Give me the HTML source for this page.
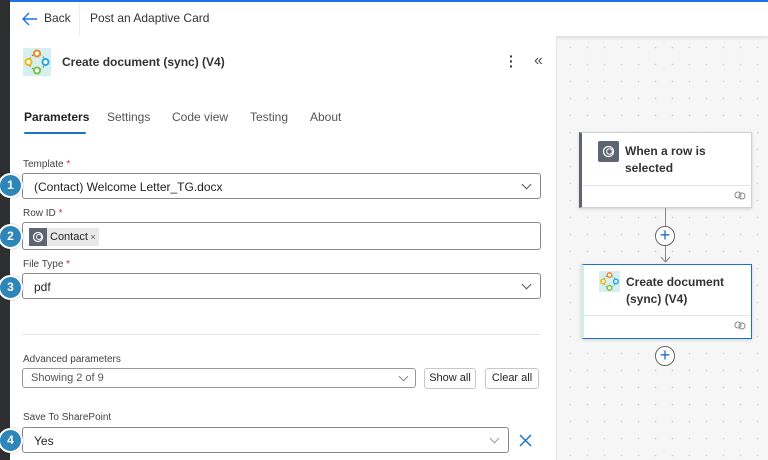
<!DOCTYPE html>
<html><head><meta charset="utf-8"><style>
*{box-sizing:border-box;margin:0;padding:0}
body{width:768px;height:460px;overflow:hidden;font-family:"Liberation Sans",sans-serif;background:#f6f6f6;position:relative;color:#242424}
.abs{position:absolute}
.lbl{position:absolute;left:23px;font-size:10px;color:#444}
.lbl b{color:#c4314b;font-weight:normal}
.inp{position:absolute;left:22px;border:1px solid #8a8a8a;border-radius:3px;background:#fff;font-size:12px;color:#242424}
.chev{position:absolute;right:10px;top:7px;width:7px;height:7px;border-right:1.2px solid #555;border-bottom:1.2px solid #555;transform:rotate(45deg)}
.num{position:absolute;left:-2px;width:25px;height:25px;border-radius:50%;background:#2e86b8;color:#fff;font-size:12px;font-weight:bold;text-align:center;line-height:21px;border:2px solid #fff;box-shadow:0 0 2px rgba(0,0,0,.3)}
.card{position:absolute;background:#fff;border:1px solid #d0d0d0;box-shadow:0 1px 3px rgba(0,0,0,.15)}
.plus{position:absolute;width:20px;height:20px;border-radius:50%;border:1px solid #666;background:#fff;color:#1b6fc7;font-size:18px;line-height:17px;text-align:center}
.btn{position:absolute;border:1px solid #c8c8c8;border-radius:3px;background:#fff;font-size:11px;text-align:center;line-height:19px}
</style></head><body>
<div class="abs" style="left:0;top:0;width:10px;height:460px;background:#2d2f31"></div>
<div class="abs" style="left:557px;top:36px;width:211px;height:424px;background-image:radial-gradient(circle,#d4d4d4 0.7px,transparent 1px);background-size:17px 17px;background-position:5px 3px"></div>
<div class="abs" style="left:10px;top:0;width:758px;height:36px;background:#fff;border-top:2px solid #1a73e8;box-shadow:0 2px 3px rgba(0,0,0,.1)">
 <svg class="abs" style="left:12px;top:10px" width="16" height="14" viewBox="0 0 16 14"><path d="M7 1L1 7l6 6M1 7h14" stroke="#1a73e8" stroke-width="1.4" fill="none"/></svg>
 <div class="abs" style="left:34px;top:9px;font-size:12px;color:#333">Back</div>
 <div class="abs" style="left:69px;top:0;width:1px;height:34px;background:#eee"></div>
 <div class="abs" style="left:80px;top:9px;font-size:12px;color:#333">Post an Adaptive Card</div>
</div>
<div class="abs" style="left:10px;top:36px;width:547px;height:424px;background:#fff;border-right:1px solid #e4e4e4"></div>
<svg class="abs" style="left:23px;top:48px" width="28" height="28" viewBox="0 0 28 28"><rect width="28" height="28" fill="#d5f0ee"/><circle cx="14" cy="14" r="8" fill="none" stroke="#777" stroke-dasharray="2 2"/><circle cx="14" cy="5.5" r="3" fill="#fff" stroke="#f08a24" stroke-width="2"/><circle cx="22.5" cy="14" r="3" fill="#fff" stroke="#21a8e0" stroke-width="2"/><circle cx="14" cy="22.5" r="3" fill="#fff" stroke="#7cc242" stroke-width="2"/><circle cx="5.5" cy="14" r="3" fill="#fff" stroke="#f5b50e" stroke-width="2"/></svg>
<div class="abs" style="left:62px;top:55px;font-size:12px;font-weight:bold;color:#333">Create document (sync) (V4)</div>
<div class="abs" style="left:509px;top:54px;font-size:14px;font-weight:bold;line-height:5px;color:#333">·<br>·<br>·</div>
<div class="abs" style="left:534px;top:52px;font-size:16px;color:#555">«</div>
<div class="abs" style="left:24px;top:110px;font-size:12px;font-weight:bold;color:#222">Parameters</div>
<div class="abs" style="left:24px;top:132px;width:62px;height:2px;background:#1a73c7;border-radius:1px"></div>
<div class="abs" style="left:107px;top:110px;font-size:12px;color:#555">Settings</div>
<div class="abs" style="left:172px;top:110px;font-size:12px;color:#555">Code view</div>
<div class="abs" style="left:250px;top:110px;font-size:12px;color:#555">Testing</div>
<div class="abs" style="left:310px;top:110px;font-size:12px;color:#555">About</div>

<div class="lbl" style="top:159px">Template <b>*</b></div>
<div class="inp" style="top:173px;width:519px;height:26px;padding:6px 11px">(Contact) Welcome Letter_TG.docx<div class="chev"></div></div>
<div class="num" style="top:173px">1</div>

<div class="lbl" style="top:208px">Row ID <b>*</b></div>
<div class="inp" style="top:222px;width:519px;height:28px">
 <div class="abs" style="left:6px;top:5px;height:18px;width:70px;background:#e9e9e9;font-size:11px;line-height:18px;padding-left:21px">Contact<span style="font-size:9px;color:#555"> ×</span></div>
 <div class="abs" style="left:6px;top:5px;width:18px;height:18px;background:#5d6570"><svg width="18" height="18" viewBox="0 0 18 18"><circle cx="9" cy="9" r="4.5" fill="none" stroke="#fff" stroke-width="1.2"/><circle cx="10" cy="9" r="2.5" fill="none" stroke="#fff" stroke-width="1"/></svg></div>
</div>
<div class="num" style="top:224px">2</div>

<div class="lbl" style="top:259px">File Type <b>*</b></div>
<div class="inp" style="top:273px;width:519px;height:26px;padding:6px 11px">pdf<div class="chev"></div></div>
<div class="num" style="top:275px">3</div>

<div class="abs" style="left:22px;top:334px;width:519px;height:1px;background:#e6e6e6"></div>
<div class="lbl" style="top:354px">Advanced parameters</div>
<div class="inp" style="top:368px;width:394px;height:20px;padding:3px 8px;font-size:11px;color:#555;border-color:#999">Showing 2 of 9<div class="chev" style="top:4px;right:8px;border-color:#888"></div></div>
<div class="btn" style="left:424px;top:368px;width:52px;height:21px">Show all</div>
<div class="btn" style="left:485px;top:368px;width:54px;height:21px">Clear all</div>

<div class="lbl" style="top:412px">Save To SharePoint</div>
<div class="inp" style="top:427px;width:487px;height:26px;padding:6px 11px">Yes<div class="chev" style="border-color:#999"></div></div>
<div class="num" style="top:428px">4</div>
<svg class="abs" style="left:519px;top:434px" width="13" height="13" viewBox="0 0 13 13"><path d="M1 1l11 11M12 1L1 12" stroke="#1a73c7" stroke-width="1.5"/></svg>

<div class="card" style="left:579px;top:132px;width:173px;height:76px;border-left:3px solid #5d6570">
 <div class="abs" style="left:16px;top:8px;width:21px;height:21px;background:#5d6570;border-radius:2px"><svg width="21" height="21" viewBox="0 0 21 21"><circle cx="10.5" cy="10.5" r="5" fill="none" stroke="#fff" stroke-width="1.2"/><circle cx="11.5" cy="10.5" r="2.8" fill="none" stroke="#fff" stroke-width="1"/></svg></div>
 <div class="abs" style="left:43px;top:10px;font-size:12px;font-weight:bold;line-height:17px;color:#333">When a row is<br>selected</div>
 <div class="abs" style="left:0;top:52px;width:170px;height:1px;background:#e4e4e4"></div>
 <svg class="abs" style="left:152px;top:58px" width="12" height="9" viewBox="0 0 12 9"><circle cx="4" cy="4" r="3" fill="none" stroke="#888"/><circle cx="8" cy="5" r="3" fill="none" stroke="#888"/></svg>
</div>
<div class="abs" style="left:665px;top:208px;width:1px;height:54px;background:#888"></div>
<svg class="abs" style="left:660px;top:256px" width="11" height="7" viewBox="0 0 11 7"><path d="M1 1l4.5 5L10 1" stroke="#888" fill="none"/></svg>
<div class="plus" style="left:655px;top:226px">+</div>
<div class="card" style="left:581px;top:264px;width:171px;height:75px;border:1.5px solid #1a73c7;border-left:3px solid #cdeeea">
 <svg class="abs" style="left:15px;top:6px" width="21" height="21" viewBox="0 0 28 28"><rect width="28" height="28" fill="#d5f0ee"/><circle cx="14" cy="14" r="8" fill="none" stroke="#777" stroke-dasharray="2 2"/><circle cx="14" cy="5.5" r="3" fill="#fff" stroke="#f08a24" stroke-width="2"/><circle cx="22.5" cy="14" r="3" fill="#fff" stroke="#21a8e0" stroke-width="2"/><circle cx="14" cy="22.5" r="3" fill="#fff" stroke="#7cc242" stroke-width="2"/><circle cx="5.5" cy="14" r="3" fill="#fff" stroke="#f5b50e" stroke-width="2"/></svg>
 <div class="abs" style="left:42px;top:9px;font-size:12px;font-weight:bold;line-height:17px;color:#333">Create document<br>(sync) (V4)</div>
 <div class="abs" style="left:0;top:50px;width:167px;height:1px;background:#e4e4e4"></div>
 <svg class="abs" style="left:150px;top:56px" width="12" height="9" viewBox="0 0 12 9"><circle cx="4" cy="4" r="3" fill="none" stroke="#888"/><circle cx="8" cy="5" r="3" fill="none" stroke="#888"/></svg>
</div>
<div class="plus" style="left:655px;top:346px">+</div>
</body></html>
